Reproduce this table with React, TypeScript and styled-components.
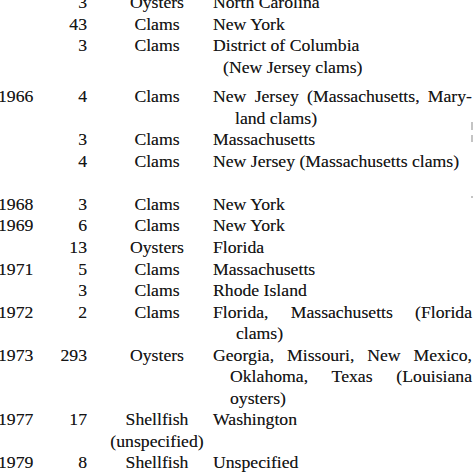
import React from 'react';
import styled, { createGlobalStyle } from 'styled-components';

const GlobalStyle = createGlobalStyle`
  html, body {
    margin: 0;
    padding: 0;
    background: #ffffff;
    overflow: hidden;
  }
`;

const Page = styled.div`
  position: relative;
  width: 474px;
  height: 474px;
  overflow: hidden;
  background: #ffffff;
  color: #161616;
  font-family: 'Liberation Serif', 'Times New Roman', serif;
  font-size: 17.7px;
  line-height: 21.55px;
  text-shadow: 0 0 0.5px rgba(0, 0, 0, 0.45);
`;

const Table = styled.div`
  display: flex;
  flex-direction: column;
  margin: -8px 0 0 -2px;
`;

const Row = styled.div<{ $space?: number }>`
  display: grid;
  grid-template-columns: 47px 42px 126px 259px;
  margin-top: ${(p) => p.$space || 0}px;
`;

const Year = styled.div`
  white-space: nowrap;
`;

const Count = styled.div`
  text-align: right;
  white-space: nowrap;
`;

const Kind = styled.div`
  padding-left: 14px;
  text-align: center;
  white-space: nowrap;
`;

const Place = styled.div`
  display: flex;
  flex-direction: column;
`;

const Line = styled.div<{ $indent?: number; $justify?: boolean }>`
  padding-left: ${(p) => p.$indent || 0}px;
  white-space: ${(p) => (p.$justify ? 'normal' : 'nowrap')};
  text-align: ${(p) => (p.$justify ? 'justify' : 'left')};
  text-align-last: ${(p) => (p.$justify ? 'justify' : 'auto')};
`;

const Speck = styled.div<{ $top: number; $h: number }>`
  position: absolute;
  right: 1px;
  top: ${(p) => p.$top}px;
  width: 2px;
  height: ${(p) => p.$h}px;
  background: #c4c4c4;
`;

type PlaceLine = { text: string; indent?: number; justify?: boolean };

type Record = {
  year?: string;
  count: string;
  kind: string[];
  place: PlaceLine[];
  space?: number;
};

const records: Record[] = [
  { count: '3', kind: ['Oysters'], place: [{ text: 'North Carolina' }] },
  { count: '43', kind: ['Clams'], place: [{ text: 'New York' }] },
  {
    count: '3',
    kind: ['Clams'],
    place: [
      { text: 'District of Columbia' },
      { text: '(New Jersey clams)', indent: 10 },
    ],
  },
  {
    year: '1966',
    count: '4',
    kind: ['Clams'],
    space: 8,
    place: [
      { text: 'New Jersey (Massachusetts, Mary-', justify: true },
      { text: 'land clams)', indent: 22 },
    ],
  },
  { count: '3', kind: ['Clams'], place: [{ text: 'Massachusetts' }] },
  {
    count: '4',
    kind: ['Clams'],
    place: [{ text: 'New Jersey (Massachusetts clams)' }],
  },
  {
    year: '1968',
    count: '3',
    kind: ['Clams'],
    space: 21.55,
    place: [{ text: 'New York' }],
  },
  { year: '1969', count: '6', kind: ['Clams'], place: [{ text: 'New York' }] },
  { count: '13', kind: ['Oysters'], place: [{ text: 'Florida' }] },
  {
    year: '1971',
    count: '5',
    kind: ['Clams'],
    place: [{ text: 'Massachusetts' }],
  },
  { count: '3', kind: ['Clams'], place: [{ text: 'Rhode Island' }] },
  {
    year: '1972',
    count: '2',
    kind: ['Clams'],
    place: [
      { text: 'Florida, Massachusetts (Florida', justify: true },
      { text: 'clams)', indent: 23 },
    ],
  },
  {
    year: '1973',
    count: '293',
    kind: ['Oysters'],
    place: [
      { text: 'Georgia, Missouri, New Mexico,', justify: true },
      { text: 'Oklahoma, Texas (Louisiana', indent: 17, justify: true },
      { text: 'oysters)', indent: 17 },
    ],
  },
  {
    year: '1977',
    count: '17',
    kind: ['Shellfish', '(unspecified)'],
    place: [{ text: 'Washington' }],
  },
  {
    year: '1979',
    count: '8',
    kind: ['Shellfish'],
    place: [{ text: 'Unspecified' }],
  },
];

export default function App() {
  return (
    <Page>
      <GlobalStyle />
      <Table>
        {records.map((r, i) => (
          <Row key={i} $space={r.space}>
            <Year>{r.year || ''}</Year>
            <Count>{r.count}</Count>
            <Kind>
              {r.kind.map((k) => (
                <div key={k}>{k}</div>
              ))}
            </Kind>
            <Place>
              {r.place.map((l) => (
                <Line key={l.text} $indent={l.indent} $justify={l.justify}>
                  {l.text}
                </Line>
              ))}
            </Place>
          </Row>
        ))}
      </Table>
      <Speck $top={122} $h={8} />
      <Speck $top={135} $h={7} />
      <Speck $top={196} $h={2} />
    </Page>
  );
}
